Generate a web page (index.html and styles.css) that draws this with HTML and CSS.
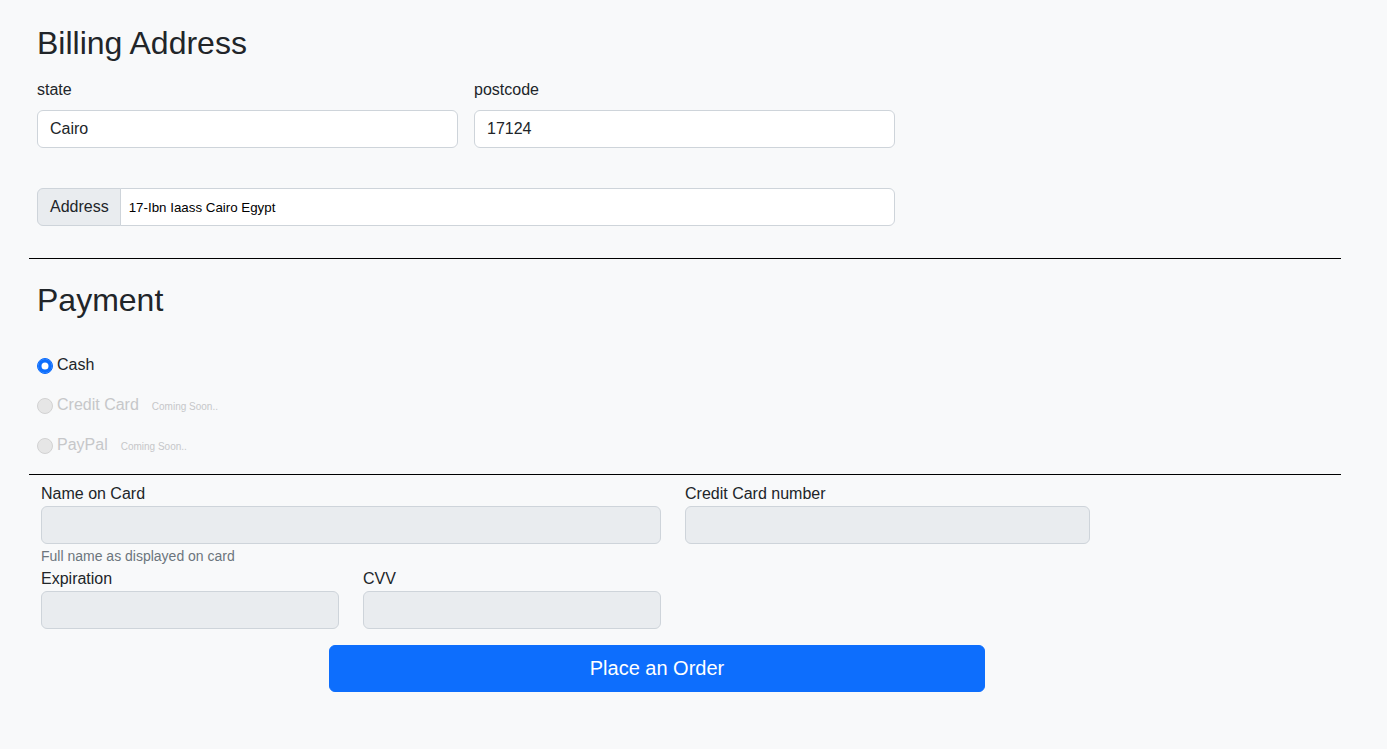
FILE: index.html
```html
<!DOCTYPE html>
<html lang="en">
<head>
<meta charset="utf-8">
<title>Checkout</title>
<link rel="stylesheet" href="styles.css">
</head>
<body>
<div class="page">
  <section class="billing">
    <h2 class="title">Billing Address</h2>
    <div class="row2">
      <div class="field">
        <label class="label" for="state">state</label>
        <input class="control" id="state" type="text" value="Cairo">
      </div>
      <div class="field">
        <label class="label" for="postcode">postcode</label>
        <input class="control" id="postcode" type="text" value="17124">
      </div>
    </div>
    <div class="input-group">
      <span class="addon">Address</span>
      <input class="addr-input" type="text" value="17-Ibn Iaass Cairo Egypt">
    </div>
  </section>
  <hr class="rule rule-1">
  <section class="payment">
    <h2 class="title">Payment</h2>
    <div class="radios">
      <label class="radio">
        <input class="radio-input" type="radio" name="pay" checked>
        <span class="radio-text">Cash</span>
      </label>
      <label class="radio disabled">
        <input class="radio-input" type="radio" name="pay" disabled>
        <span class="radio-text">Credit Card</span><small class="soon">Coming Soon..</small>
      </label>
      <label class="radio disabled">
        <input class="radio-input" type="radio" name="pay" disabled>
        <span class="radio-text">PayPal</span><small class="soon">Coming Soon..</small>
      </label>
    </div>
  </section>
  <hr class="rule rule-2">
  <section class="card">
    <div class="card-grid">
      <div class="cell span2">
        <label class="label-tight">Name on Card</label>
        <input class="control" type="text" disabled>
        <div class="help">Full name as displayed on card</div>
      </div>
      <div class="cell">
        <label class="label-tight">Credit Card number</label>
        <input class="control" type="text" disabled>
      </div>
      <div class="cell">
        <label class="label-tight">Expiration</label>
        <input class="control" type="text" disabled>
      </div>
      <div class="cell">
        <label class="label-tight">CVV</label>
        <input class="control" type="text" disabled>
      </div>
    </div>
  </section>
  <button class="order-btn" type="button">Place an Order</button>
</div>
</body>
</html>
```
FILE: styles.css
```css
* { box-sizing: border-box; }

body {
  margin: 0;
  background: #f8f9fa;
  color: #212529;
  font-family: "Liberation Sans", Arial, sans-serif;
  font-size: 16px;
  line-height: 1.5;
}

.page {
  width: 1312px;
  margin-left: 29px;
  padding-bottom: 56px;
}

.title {
  font-size: 32px;
  font-weight: 400;
  line-height: 1.2;
  margin: 0 0 16px;
}

.billing {
  padding: 24px 8px 0;
}

.row2 {
  display: flex;
  gap: 16px;
  width: 858px;
}

.field { flex: 1; }

.label {
  display: block;
  margin-bottom: 8px;
}

.control {
  display: block;
  width: 100%;
  height: 38px;
  padding: 6px 12px;
  font: inherit;
  font-size: 16px;
  color: #212529;
  background: #fff;
  border: 1px solid #ced4da;
  border-radius: 6px;
  outline: none;
}

.control:disabled {
  background: #e9ecef;
  border-color: #ced4da;
}

.input-group {
  display: flex;
  width: 858px;
  height: 38px;
  margin-top: 40px;
}

.addon {
  display: flex;
  align-items: center;
  padding: 6px 11px 6px 12px;
  background: #e9ecef;
  border: 1px solid #ced4da;
  border-radius: 6px 0 0 6px;
}

.addr-input {
  flex: 1;
  height: 38px;
  margin-left: -1px;
  padding: 1px 8px;
  font-family: "Liberation Sans", Arial, sans-serif;
  font-size: 13.333px;
  color: #000;
  background: #fff;
  border: 1px solid #ced4da;
  border-radius: 0 6px 6px 0;
  outline: none;
}

.rule {
  margin: 0;
  border: 0;
  border-top: 1px solid #000;
  opacity: 1;
}

.rule-1 { margin-top: 32px; }

.payment {
  padding: 22px 8px 0;
}

.payment .title { margin-bottom: 33px; }

.radios {
  display: flex;
  flex-direction: column;
  gap: 16px;
  margin-bottom: 17px;
}

.radio {
  display: flex;
  align-items: baseline;
  height: 24px;
  line-height: 24px;
}

.radio-input {
  appearance: none;
  -webkit-appearance: none;
  flex: none;
  width: 16px;
  height: 16px;
  margin: 0 4px 0 0;
  align-self: center;
  border: 1px solid rgba(0,0,0,.25);
  border-radius: 50%;
  background: #fff;
  position: relative;
  top: 1px;
}

.radio-input:checked {
  background: #0d6efd;
  border-color: #0d6efd;
  box-shadow: inset 0 0 0 3.5px #0d6efd, inset 0 0 0 8px #fff;
}

.radio-input:disabled {
  background: #e6e6e6;
  border-color: #d2d2d2;
}

.disabled .radio-text { color: #c6c7c9; }

.soon {
  margin-left: 13px;
  font-size: 10px;
  line-height: 1;
  color: #c6c7c9;
}

.card {
  padding: 7px 12px 0;
}

.card-grid {
  display: grid;
  grid-template-columns: 298px 298px 405px;
  column-gap: 24px;
}

.span2 { grid-column: span 2; }

.label-tight {
  display: block;
  line-height: 24px;
}

.help {
  margin-top: 2px;
  font-size: 14px;
  line-height: 21px;
  color: #6c757d;
}

.order-btn {
  display: block;
  width: 656px;
  height: 47px;
  margin: 16px 0 0 300px;
  padding: 0 16px;
  font-family: "Liberation Sans", Arial, sans-serif;
  font-size: 20px;
  color: #fff;
  background: #0d6efd;
  border: 1px solid #0d6efd;
  border-radius: 6px;
  cursor: pointer;
}
```
